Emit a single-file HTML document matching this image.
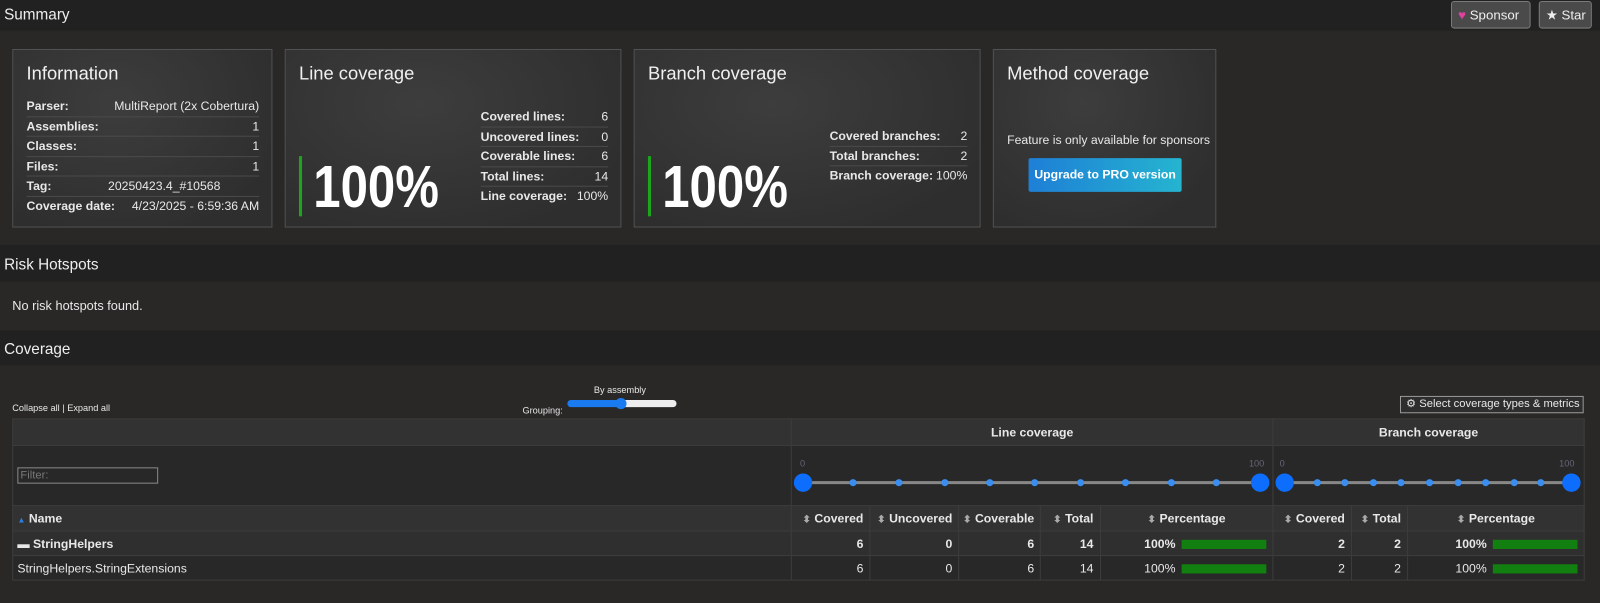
<!DOCTYPE html>
<html><head><meta charset="utf-8"><style>
*{box-sizing:border-box;margin:0;padding:0}
body{width:1600px;height:603px;background:#292827;font-family:"Liberation Sans",sans-serif;color:#e8e8e8;position:relative;overflow:hidden;font-size:12px}
#w{position:absolute;left:0;top:0;width:1568px;height:591px;transform:scale(1.0204);transform-origin:0 0}
.a{position:absolute}
.band{position:absolute;left:0;width:1600px;background:#212121}
.band h1{position:absolute;left:4px;font-weight:normal;font-size:15px;color:#eee}
.card{position:absolute;top:48px;height:175px;border:1px solid #515151;background:radial-gradient(ellipse at 40% 30%,#3d3d3d,#2e2e2e 80%)}
.card h2{position:absolute;left:13px;top:13px;font-weight:normal;font-size:18px;color:#f0f0f0}
.kv{position:absolute;font-size:12px}
.kv div{display:flex;justify-content:space-between;height:19.5px;line-height:18px;border-bottom:1px solid #4a4a4a}
.kv div:last-child{border-bottom:none}
.kv b{font-weight:bold}
.big{position:absolute;font-size:58px;font-weight:bold;color:#fff;transform:scaleX(0.83);transform-origin:0 0;line-height:1}
.gbar{position:absolute;width:3px;background:#1da51d}
.btn{position:absolute;top:1px;height:27px;border:1px solid #7a7a7a;border-radius:3px;background:#4a4a4a;color:#eee;font-size:13px;line-height:25px;padding-left:6px}
table{position:absolute;left:12px;top:410px;width:1541px;border-collapse:collapse;font-size:12px}
td,th{border:1px solid #3d3d3d}
th{font-weight:bold}
.r{text-align:right;padding-right:6px}
.s{color:#aaa;font-size:10px}
.pb{display:inline-block;width:83px;height:9px;background:#118011;vertical-align:middle}
</style></head><body><div id="w">
<div class="band" style="top:0;height:30px"><h1 style="top:6px">Summary</h1></div>
<div class="btn" style="left:1422px;width:78px"><span style="color:#e040a0;font-size:13px">♥</span> Sponsor</div>
<div class="btn" style="left:1508px;width:52px">★ Star</div>

<div class="card" style="left:12px;width:255px"><h2>Information</h2>
<div class="kv" style="left:13px;top:46px;width:228px">
<div><b>Parser:</b><span>MultiReport (2x Cobertura)</span></div>
<div><b>Assemblies:</b><span>1</span></div>
<div><b>Classes:</b><span>1</span></div>
<div><b>Files:</b><span>1</span></div>
<div><b>Tag:</b><span style="margin-right:38px">20250423.4_#10568</span></div>
<div><b>Coverage date:</b><span>4/23/2025 - 6:59:36 AM</span></div>
</div></div>

<div class="card" style="left:279px;width:330px"><h2>Line coverage</h2>
<div class="gbar" style="left:13px;top:104px;height:59px"></div>
<div class="big" style="left:27px;top:106px">100%</div>
<div class="kv" style="left:191px;top:56px;width:125px">
<div><b>Covered lines:</b><span>6</span></div>
<div><b>Uncovered lines:</b><span>0</span></div>
<div><b>Coverable lines:</b><span>6</span></div>
<div><b>Total lines:</b><span>14</span></div>
<div><b>Line coverage:</b><span>100%</span></div>
</div></div>

<div class="card" style="left:621px;width:340px"><h2>Branch coverage</h2>
<div class="gbar" style="left:13px;top:104px;height:59px"></div>
<div class="big" style="left:27px;top:106px">100%</div>
<div class="kv" style="left:191px;top:75px;width:135px">
<div><b>Covered branches:</b><span>2</span></div>
<div><b>Total branches:</b><span>2</span></div>
<div><b>Branch coverage:</b><span>100%</span></div>
</div></div>

<div class="card" style="left:973px;width:219px"><h2>Method coverage</h2>
<div class="a" style="left:13px;top:81px;font-size:12px;white-space:nowrap">Feature is only available for sponsors</div>
<div class="a" style="left:34px;top:106px;width:150px;height:33px;border-radius:2px;background:linear-gradient(90deg,#1e7fd6,#25b4d0);color:#fff;font-weight:bold;font-size:12px;line-height:33px;text-align:center">Upgrade to PRO version</div>
</div>

<div class="band" style="top:240px;height:36px"><h1 style="top:11px">Risk Hotspots</h1></div>
<div class="a" style="left:12px;top:293px;font-size:12.5px">No risk hotspots found.</div>
<div class="band" style="top:324px;height:34px"><h1 style="top:10px">Coverage</h1></div>

<div class="a" style="left:12px;top:395px;font-size:9px">Collapse all | Expand all</div>
<div class="a" style="left:582px;top:377px;font-size:9px">By assembly</div>
<div class="a" style="left:512px;top:397px;font-size:9px">Grouping:</div>
<div class="a" style="left:556px;top:392px;width:107px;height:7px;border-radius:4px;background:linear-gradient(90deg,#1a7af0 50%,#eee 50%)"></div>
<div class="a" style="left:603px;top:390px;width:11px;height:11px;border-radius:50%;background:#1a7af0"></div>
<div class="a" style="left:1372px;top:388px;width:180px;height:17px;border:1px solid #999;background:#2e2e2e;font-size:11px;line-height:15px;padding-left:5px;white-space:nowrap">⚙ Select coverage types &amp; metrics</div>

<table>
<tr style="height:26px;background:#323232"><th style="width:766px"></th><th colspan="5">Line coverage</th><th colspan="3">Branch coverage</th></tr>
<tr style="height:58px;background:#282828"><td style="padding-left:4px"><div style="width:138px;height:16px;border:1px solid #888;color:#777;font-size:11px;line-height:14px;padding-left:2px">Filter:</div></td>
<td colspan="5" style="position:relative"><svg width="471" height="58" style="display:block"><text x="8" y="20" fill="#667" font-size="9" font-family="Liberation Sans">0</text><text x="448" y="20" fill="#667" font-size="9" font-family="Liberation Sans">100</text><line x1="11" y1="36" x2="459" y2="36" stroke="#888" stroke-width="3"/><g fill="#3a8ef0"><circle cx="60" cy="36" r="3.5"/><circle cx="105" cy="36" r="3.5"/><circle cx="150" cy="36" r="3.5"/><circle cx="194" cy="36" r="3.5"/><circle cx="238" cy="36" r="3.5"/><circle cx="283" cy="36" r="3.5"/><circle cx="327" cy="36" r="3.5"/><circle cx="372" cy="36" r="3.5"/><circle cx="416" cy="36" r="3.5"/></g><circle cx="11" cy="36" r="9" fill="#0d6efd"/><circle cx="459" cy="36" r="9" fill="#0d6efd"/></svg></td>
<td colspan="3"><svg width="304" height="58" style="display:block"><text x="6" y="20" fill="#667" font-size="9" font-family="Liberation Sans">0</text><text x="280" y="20" fill="#667" font-size="9" font-family="Liberation Sans">100</text><line x1="11" y1="36" x2="293" y2="36" stroke="#888" stroke-width="3"/><g fill="#3a8ef0"><circle cx="43" cy="36" r="3.5"/><circle cx="70" cy="36" r="3.5"/><circle cx="98" cy="36" r="3.5"/><circle cx="125" cy="36" r="3.5"/><circle cx="153" cy="36" r="3.5"/><circle cx="181" cy="36" r="3.5"/><circle cx="208" cy="36" r="3.5"/><circle cx="236" cy="36" r="3.5"/><circle cx="262" cy="36" r="3.5"/></g><circle cx="11" cy="36" r="9" fill="#0d6efd"/><circle cx="292" cy="36" r="9" fill="#0d6efd"/></svg></td></tr>
<tr style="height:25px;background:#323232"><th style="text-align:left;padding-left:4px"><span style="color:#2a80e0;font-size:8px">▲</span> Name</th>
<th class="r" style="width:77px"><span class="s">⬍</span> Covered</th><th class="r" style="width:87px"><span class="s">⬍</span> Uncovered</th><th class="r" style="width:80px"><span class="s">⬍</span> Coverable</th><th class="r" style="width:58px"><span class="s">⬍</span> Total</th><th style="width:169px"><span class="s">⬍</span> Percentage</th>
<th class="r" style="width:77px"><span class="s">⬍</span> Covered</th><th class="r" style="width:55px"><span class="s">⬍</span> Total</th><th><span class="s">⬍</span> Percentage</th></tr>
<tr style="height:24px;background:#2f2f2f;font-weight:bold"><td style="padding-left:4px">▬ StringHelpers</td><td class="r">6</td><td class="r">0</td><td class="r">6</td><td class="r">14</td><td class="r"><span style="margin-right:6px">100%</span><span class="pb"></span></td><td class="r">2</td><td class="r">2</td><td class="r"><span style="margin-right:6px">100%</span><span class="pb"></span></td></tr>
<tr style="height:24px;background:#282828"><td style="padding-left:4px">StringHelpers.StringExtensions</td><td class="r">6</td><td class="r">0</td><td class="r">6</td><td class="r">14</td><td class="r"><span style="margin-right:6px">100%</span><span class="pb"></span></td><td class="r">2</td><td class="r">2</td><td class="r"><span style="margin-right:6px">100%</span><span class="pb"></span></td></tr>
</table>
</div></body></html>
